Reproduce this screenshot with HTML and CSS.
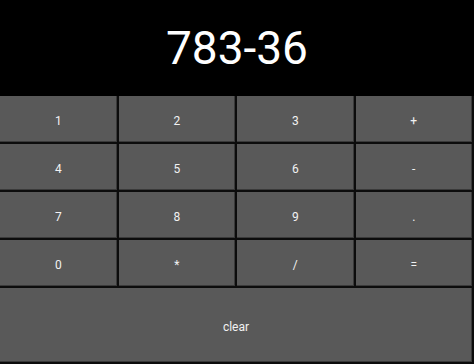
FILE: index.html
```html
<!DOCTYPE html>
<html>
<head>
<meta charset="utf-8">
<link rel="stylesheet" href="styles.css">
</head>
<body>
<div class="calc">
  <div class="display">783-36</div>
  <div class="keys">
    <div class="key">1</div>
    <div class="key">2</div>
    <div class="key">3</div>
    <div class="key">+</div>
    <div class="key">4</div>
    <div class="key">5</div>
    <div class="key">6</div>
    <div class="key">-</div>
    <div class="key">7</div>
    <div class="key">8</div>
    <div class="key">9</div>
    <div class="key">.</div>
    <div class="key">0</div>
    <div class="key">*</div>
    <div class="key">/</div>
    <div class="key">=</div>
    <div class="key key-clear">clear</div>
  </div>
</div>
</body>
</html>
```
FILE: styles.css
```css
html, body {
  margin: 0;
  padding: 0;
  background: #000;
}
.calc {
  width: 474px;
  height: 364px;
  display: flex;
  flex-direction: column;
  font-family: Roboto, "Liberation Sans", sans-serif;
}
.display {
  height: 96px;
  display: flex;
  align-items: center;
  justify-content: center;
  color: #fff;
  font-size: 46px;
  font-weight: 400;
  background: #000;
}
.keys {
  flex: 1;
  display: grid;
  grid-template-columns: repeat(4, 1fr);
  grid-template-rows: repeat(4, 48px) 1fr;
}
.key {
  display: flex;
  align-items: center;
  justify-content: center;
  padding-top: 3px;
  background: #595959;
  color: #f2f2f2;
  font-size: 12px;
  border-right: 2px solid #0c0c0c;
  border-bottom: 2px solid #0c0c0c;
  box-shadow: inset -1px -1px 0 #3a3a3a;
}
.key-clear {
  grid-column: 1 / span 4;
}
```
